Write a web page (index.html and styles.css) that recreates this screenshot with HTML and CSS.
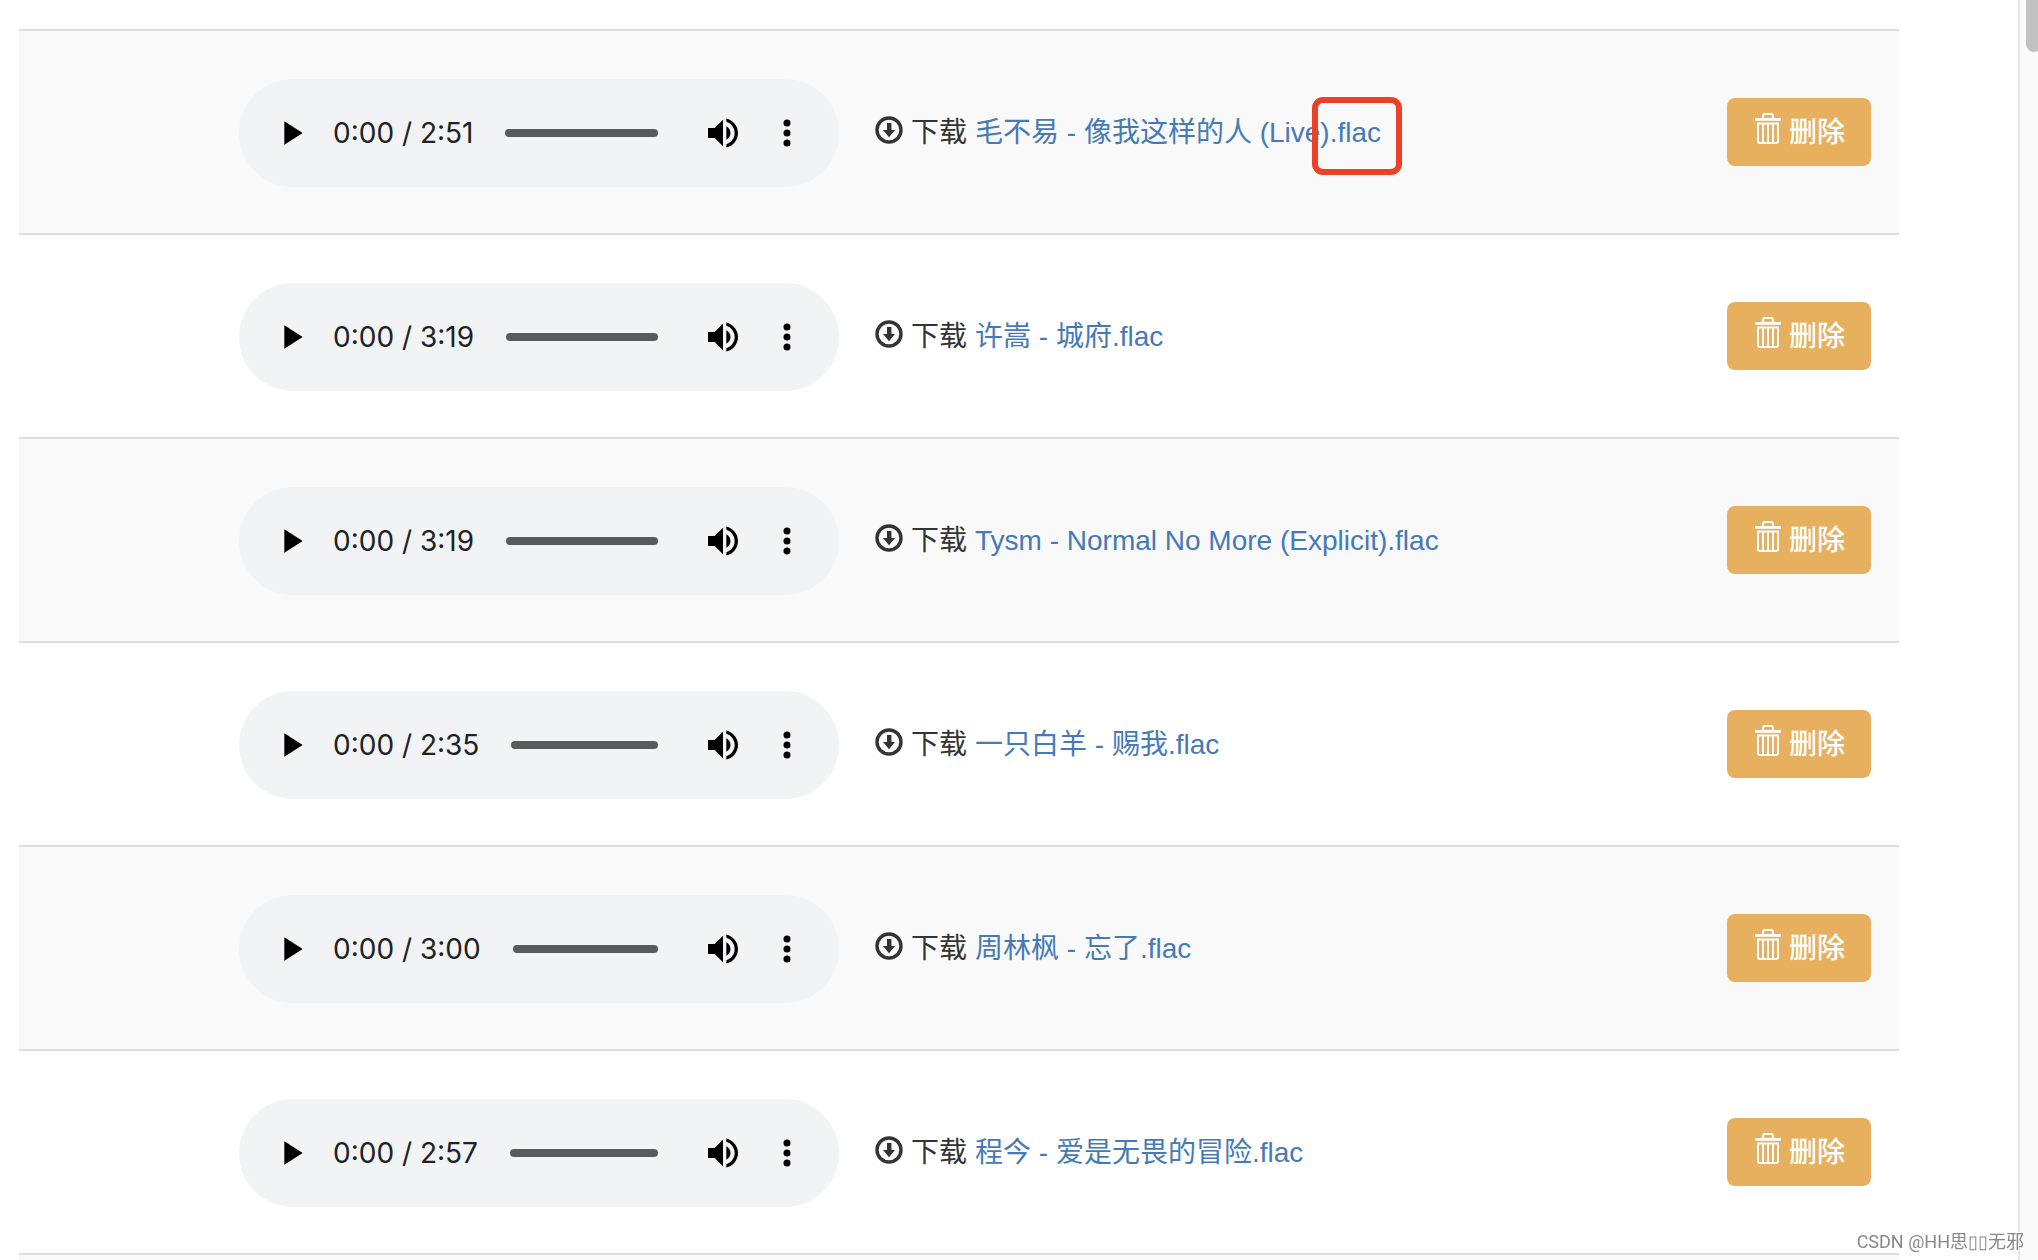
FILE: index.html
```
<!DOCTYPE html>
<html lang="zh-CN">
<head>
  <meta charset="utf-8">
  <title>音乐列表</title>
  <link rel="stylesheet" href="styles.css">
</head>
<body>
  <!-- 图标 -->
  <svg class="sprite" aria-hidden="true">
    <symbol id="i-play" viewBox="0 0 24 24"><path d="M8 5v14l11-7z"/></symbol>
    <symbol id="i-volume" viewBox="0 0 24 24"><path d="M3 9v6h4l5 5V4L7 9H3zm13.5 3c0-1.77-1.02-3.29-2.5-4.03v8.05c1.48-.73 2.5-2.25 2.5-4.02zM14 3.23v2.06c2.89.86 5 3.54 5 6.71s-2.11 5.85-5 6.71v2.06c4.01-.91 7-4.49 7-8.77s-2.99-7.86-7-8.77z"/></symbol>
    <symbol id="i-more" viewBox="0 0 24 24"><circle cx="12" cy="6" r="2.1"/><circle cx="12" cy="12" r="2.1"/><circle cx="12" cy="18" r="2.1"/></symbol>
    <symbol id="i-download" viewBox="0 0 28 28"><circle cx="14" cy="14" r="12" fill="none" stroke="currentColor" stroke-width="3.4"/><path d="M12 7h4.400v7H20l-6 7.200L8 14h4z"/></symbol>
    <symbol id="i-trash" viewBox="0 0 28 32"><path fill="none" stroke="currentColor" stroke-width="2" d="M10 6V4.200Q10 2 12 2h6Q20 2 20 4.200V6"/><path d="M2 6h26v2.800H2z"/><path fill="none" stroke="currentColor" stroke-width="2" d="M5 11.500h20V29q0 2-2 2H7q-2 0-2-2z"/><path fill="none" stroke="currentColor" stroke-width="2" d="M10 12v18M15 12v18M20 12v18"/></symbol>
  </svg>

  <table class="table">
    <tbody id="list"></tbody>
  </table>

  <div class="scrollbar"><div class="thumb"></div></div>
  <div class="watermark">CSDN @HH思▯▯无邪</div>

  <script src="list.js"></script>
</body>
</html>
```

FILE: styles.css
```
* {
  box-sizing: border-box;
}

body {
  margin: 0;
  padding: 29px 139px 0 19px;
  height: 100vh;
  overflow: hidden;
  background: #fff;
  color: #333;
  font-family: "Liberation Sans", "Noto Sans CJK SC", sans-serif;
  font-size: 28px;
  line-height: 40px;
}

button {
  border: 0;
  padding: 0;
  font: inherit;
  cursor: pointer;
}

svg {
  fill: currentColor;
}

.sprite {
  position: absolute;
  width: 0;
  height: 0;
}

/* 列表 */
.table {
  width: 100%;
  border-collapse: separate;
  border-spacing: 0;
}

.table td {
  padding: 0 16px;
  border-top: 2px solid #ddd;
  vertical-align: middle;
}

.table tr:nth-child(odd) td {
  background: #f9f9f9;
}

.table .col-blank {
  width: 204px;
}

.table .col-player {
  width: 636px;
  padding: 48px 16px 46px;
}

.table .col-name {
  position: relative;
  padding-top: 2px;
}

.table .col-action {
  width: 188px;
  padding-right: 28px;
}

/* 播放器 */
.player {
  display: flex;
  align-items: center;
  width: 600px;
  height: 108px;
  padding: 0 20px;
  border-radius: 54px;
  background: #f1f3f4;
}

.player button {
  display: flex;
  justify-content: center;
  width: 64px;
  background: none;
  color: #000;
}

.player svg {
  width: 40px;
  height: 40px;
}

.time {
  margin-left: 10px;
  color: #202124;
  font-family: Inter, sans-serif;
  font-size: 28px;
  white-space: nowrap;
}

.progress {
  flex: 1;
  min-width: 0;
  height: 8px;
  margin: 0 33px 0 32px;
  border-radius: 4px;
  background: #5a5a5a;
  appearance: none;
}

.progress::-webkit-slider-thumb {
  appearance: none;
  width: 0;
  height: 0;
}

/* 下载 */
.song {
  display: flex;
  align-items: center;
  gap: 8px;
  white-space: nowrap;
}

.song svg {
  width: 28px;
  height: 28px;
  margin-bottom: 6px;
}

.song a {
  color: #457ab6;
  text-decoration: none;
}

.mark {
  position: absolute;
  left: 453px;
  top: 66px;
  width: 90px;
  height: 78px;
  border: 6px solid #ec4128;
  border-radius: 11px;
}

.btn-delete {
  display: flex;
  align-items: center;
  justify-content: center;
  gap: 8px;
  width: 144px;
  height: 68px;
  border-radius: 8px;
  background: #e6b05f;
  color: #fff;
}

.btn-delete span {
  padding-top: 2px;
  font-weight: 500;
}

.btn-delete svg {
  width: 28px;
  height: 32px;
  margin-bottom: 8px;
}

/* 滚动条 */
.scrollbar {
  position: fixed;
  top: 0;
  right: 0;
  bottom: 0;
  width: 20px;
  border-left: 2px solid #e8e8e8;
  background: #fafafa;
  overflow: hidden;
}

.thumb {
  width: 16px;
  height: 52px;
  margin-left: 6px;
  border-radius: 0 0 8px 8px;
  background: #c1c1c1;
}

.watermark {
  position: fixed;
  right: 14px;
  bottom: 4px;
  color: #888;
  font-family: Roboto, "Noto Sans CJK SC", sans-serif;
  font-size: 18px;
  line-height: 28px;
  text-shadow: -1px -1px 0 #fff;
}
```

FILE: list.js
```
var songs = [
  { time: '2:51', name: '毛不易 - 像我这样的人 (Live).flac', mark: true },
  { time: '3:19', name: '许嵩 - 城府.flac' },
  { time: '3:19', name: 'Tysm - Normal No More (Explicit).flac' },
  { time: '2:35', name: '一只白羊 - 赐我.flac' },
  { time: '3:00', name: '周林枫 - 忘了.flac' },
  { time: '2:57', name: '程今 - 爱是无畏的冒险.flac' }
];

function icon(id) {
  return '<svg aria-hidden="true"><use href="#i-' + id + '"></use></svg>';
}

var html = '';
for (var i = 0; i < songs.length; i++) {
  var s = songs[i];
  html += '<tr>';
  html += '<td class="col-blank"></td>';
  html += '<td class="col-player"><div class="player">';
  html += '<button type="button" aria-label="播放">' + icon('play') + '</button>';
  html += '<span class="time">0:00 / ' + s.time + '</span>';
  html += '<input class="progress" type="range" value="0" aria-label="进度">';
  html += '<button type="button" aria-label="音量">' + icon('volume') + '</button>';
  html += '<button type="button" aria-label="更多">' + icon('more') + '</button>';
  html += '</div></td>';
  html += '<td class="col-name"><div class="song">' + icon('download') + '<span>下载</span><a href="#">' + s.name + '</a></div>';
  if (s.mark) {
    html += '<div class="mark"></div>';
  }
  html += '</td>';
  html += '<td class="col-action"><button type="button" class="btn-delete">' + icon('trash') + '<span>删除</span></button></td>';
  html += '</tr>';
}
// 下一行只露出上边
html += '<tr><td class="col-blank"></td><td class="col-player"></td><td class="col-name"></td><td class="col-action"></td></tr>';
document.getElementById('list').innerHTML = html;
```
